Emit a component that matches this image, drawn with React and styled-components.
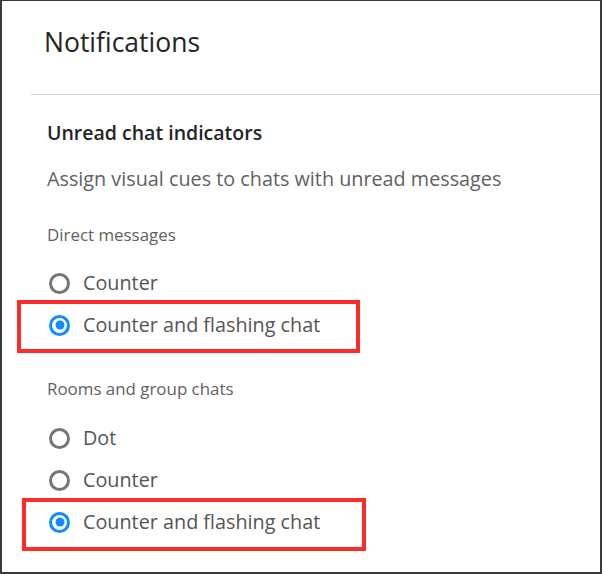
import React, { useState } from 'react';
import styled, { createGlobalStyle } from 'styled-components';

const GlobalStyle = createGlobalStyle`
  * {
    box-sizing: border-box;
  }
  body {
    margin: 0;
    background: #ffffff;
    font-family: 'Segoe UI', 'Open Sans', 'Noto Sans', sans-serif;
  }
`;

const Panel = styled.div`
  width: 602px;
  height: 574px;
  border: 2px solid #3a3a3a;
  border-top-width: 1px;
  background: #ffffff;
  overflow: hidden;
`;

const Header = styled.header`
  padding: 25px 0 0 42px;
  height: 93px;
`;

const Title = styled.h1`
  margin: 0;
  font-size: 26.5px;
  line-height: 32px;
  font-weight: 400;
  color: #242424;
`;

const Divider = styled.hr`
  margin: 0 0 0 29px;
  border: 0;
  height: 1px;
  background: #d3d1da;
`;

const Content = styled.section`
  padding: 26px 0 0 45px;
  display: flex;
  flex-direction: column;
`;

const SectionTitle = styled.h2`
  margin: 0;
  font-size: 19.5px;
  line-height: 24px;
  font-weight: 600;
  color: #242424;
`;

const Description = styled.p`
  margin: 22px 0 0;
  font-size: 19.8px;
  line-height: 24px;
  color: #616161;
`;

const GroupLabel = styled.div`
  margin-top: ${(p) => p.$top}px;
  font-size: 16.9px;
  line-height: 22px;
  color: #616161;
`;

const Options = styled.div`
  margin-top: ${(p) => p.$top}px;
  display: flex;
  flex-direction: column;
`;

const Row = styled.label`
  position: relative;
  display: flex;
  align-items: center;
  gap: 13px;
  height: 42px;
  cursor: pointer;
`;

const Circle = styled.span`
  position: relative;
  width: 21px;
  height: 21px;
  margin-left: 2px;
  border-radius: 50%;
  border: 3px solid ${(p) => (p.$checked ? '#0f8cff' : '#767676')};
  flex-shrink: 0;

  &::after {
    content: '';
    display: ${(p) => (p.$checked ? 'block' : 'none')};
    position: absolute;
    left: 50%;
    top: 50%;
    width: 9px;
    height: 9px;
    border-radius: 50%;
    background: #0f8cff;
    transform: translate(-50%, -50%);
  }
`;

const OptionText = styled.span`
  font-size: 19.8px;
  line-height: 24px;
  color: #555555;
`;

const Highlight = styled.span`
  position: absolute;
  left: ${(p) => p.$left}px;
  top: ${(p) => p.$top}px;
  width: ${(p) => p.$width}px;
  height: 53px;
  border: 4px solid #ff2a2a;
  pointer-events: none;
`;

function RadioOption({ label, checked, onSelect, highlight }) {
  return (
    <Row onClick={onSelect}>
      <Circle $checked={checked} />
      <OptionText>{label}</OptionText>
      {highlight && (
        <Highlight
          $left={highlight.left}
          $top={highlight.top}
          $width={highlight.width}
        />
      )}
    </Row>
  );
}

export default function App() {
  const [direct, setDirect] = useState('flash');
  const [rooms, setRooms] = useState('flash');

  return (
    <>
      <GlobalStyle />
      <Panel>
        <Header>
          <Title>Notifications</Title>
        </Header>
        <Divider />
        <Content>
          <SectionTitle>Unread chat indicators</SectionTitle>
          <Description>Assign visual cues to chats with unread messages</Description>

          <GroupLabel $top={33}>Direct messages</GroupLabel>
          <Options $top={16}>
            <RadioOption
              label="Counter"
              checked={direct === 'counter'}
              onSelect={() => setDirect('counter')}
            />
            <RadioOption
              label="Counter and flashing chat"
              checked={direct === 'flash'}
              onSelect={() => setDirect('flash')}
              highlight={{ left: -30, top: -4, width: 343 }}
            />
          </Options>

          <GroupLabel $top={32}>Rooms and group chats</GroupLabel>
          <Options $top={17}>
            <RadioOption
              label="Dot"
              checked={rooms === 'dot'}
              onSelect={() => setRooms('dot')}
            />
            <RadioOption
              label="Counter"
              checked={rooms === 'counter'}
              onSelect={() => setRooms('counter')}
            />
            <RadioOption
              label="Counter and flashing chat"
              checked={rooms === 'flash'}
              onSelect={() => setRooms('flash')}
              highlight={{ left: -25, top: -3, width: 344 }}
            />
          </Options>
        </Content>
      </Panel>
    </>
  );
}
